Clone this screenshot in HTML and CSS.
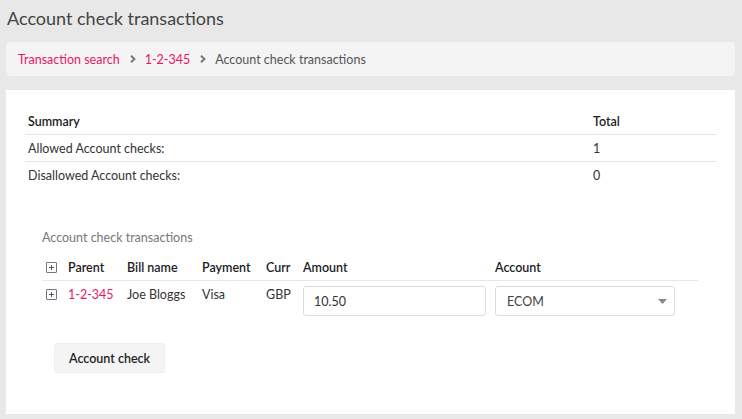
FILE: index.html
```html
<!DOCTYPE html>
<html lang="en">
<head>
    <meta charset="UTF-8">
    <meta name="viewport" content="width=device-width, initial-scale=1.0">
    <title>Account check transactions</title>
    <link rel="stylesheet" href="styles.css">
</head>
<body>
    <h1 class="page-title">Account check transactions</h1>

    <nav class="breadcrumb">
        <a href="#">Transaction search</a>
        <span class="sep"><svg width="6" height="8" viewBox="0 0 6 8"><path d="M1 0.8 L4.4 4 L1 7.2" fill="none" stroke="#777" stroke-width="2"/></svg></span>
        <a href="#">1-2-345</a>
        <span class="sep"><svg width="6" height="8" viewBox="0 0 6 8"><path d="M1 0.8 L4.4 4 L1 7.2" fill="none" stroke="#777" stroke-width="2"/></svg></span>
        <span class="current">Account check transactions</span>
    </nav>

    <div class="panel">
        <table class="summary">
            <thead>
                <tr>
                    <th class="col-label">Summary</th>
                    <th>Total</th>
                </tr>
            </thead>
            <tbody>
                <tr>
                    <td>Allowed Account checks:</td>
                    <td>1</td>
                </tr>
                <tr>
                    <td>Disallowed Account checks:</td>
                    <td>0</td>
                </tr>
            </tbody>
        </table>

        <div class="section">
            <div class="section-title">Account check transactions</div>
            <table class="transactions">
                <thead>
                    <tr>
                        <th class="col-icon"><span class="expand"></span></th>
                        <th class="col-parent">Parent</th>
                        <th class="col-bill">Bill name</th>
                        <th class="col-payment">Payment</th>
                        <th class="col-curr">Curr</th>
                        <th class="col-amount">Amount</th>
                        <th>Account</th>
                    </tr>
                </thead>
                <tbody>
                    <tr>
                        <td><span class="expand"></span></td>
                        <td><a href="#">1-2-345</a></td>
                        <td>Joe Bloggs</td>
                        <td>Visa</td>
                        <td>GBP</td>
                        <td><input type="text" class="field" value="10.50"></td>
                        <td>
                            <div class="select">
                                <span>ECOM</span>
                                <svg width="9" height="5" viewBox="0 0 9 5"><path d="M0 0 H9 L4.5 5 Z" fill="#888"/></svg>
                            </div>
                        </td>
                    </tr>
                </tbody>
            </table>

            <button class="btn">Account check</button>
        </div>
    </div>
</body>
</html>
```

FILE: styles.css
```css
/* General Styles */
body {
    font-family: Lato, "Open Sans", sans-serif;
    font-size: 12.5px;
    color: #333;
    background: #e8e8e8;
    margin: 0;
    padding: 0 7px 0 6px;
}

a {
    color: #e5195e;
    text-decoration: none;
}

.page-title {
    font-size: 18px;
    font-weight: normal;
    color: #444;
    line-height: 24px;
    margin: 0 0 12px;
    padding: 6px 0 0 1px;
}

.breadcrumb {
    display: flex;
    align-items: center;
    height: 34px;
    padding: 0 12px;
    background: #f4f4f4;
    border-radius: 4px;
    margin-bottom: 14px;
}

.breadcrumb .sep {
    display: flex;
    margin: 0 9px 0 10px;
}

.breadcrumb .current {
    color: #555;
}

.panel {
    background: #fff;
    padding: 18px 18px 41px 19px;
}

table {
    border-collapse: collapse;
}

th {
    text-align: left;
    font-weight: 600;
    color: #222;
}

/* Summary */
.summary {
    width: 100%;
}

.summary th,
.summary td {
    height: 26px;
    padding: 0 3px;
}

.summary tr {
    border-bottom: 1px solid #e6e6e6;
}

.summary tbody tr:last-child {
    border-bottom: none;
}

.summary .col-label {
    width: 559px;
}

/* Transactions */
.section {
    padding: 42px 19px 0 17px;
}

.section-title {
    color: #777;
    margin-bottom: 9px;
}

.transactions {
    width: 100%;
}

.transactions th {
    height: 26px;
    padding: 0 4px;
    border-bottom: 1px solid #e6e6e6;
}

.transactions td {
    padding: 5px 4px 4px;
    vertical-align: top;
}

.transactions tbody td:not(:nth-child(6)):not(:nth-child(7)) {
    padding-top: 6px;
}

.col-icon { width: 14px; }
.col-parent { width: 51px; }
.col-bill { width: 67px; }
.col-payment { width: 56px; }
.col-curr { width: 29px; }
.col-amount { width: 184px; }

.expand {
    display: inline-block;
    position: relative;
    width: 9px;
    height: 9px;
    border: 1px solid #7a7388;
    border-radius: 1px;
    vertical-align: -1px;
}

.expand::before,
.expand::after {
    content: "";
    position: absolute;
    background: #555;
}

.expand::before {
    left: 2px;
    top: 4px;
    width: 5px;
    height: 1px;
}

.expand::after {
    left: 4px;
    top: 2px;
    width: 1px;
    height: 5px;
}

.field {
    box-sizing: border-box;
    width: 183px;
    height: 30px;
    padding: 0 10px;
    border: 1px solid #ddd;
    border-radius: 3px;
    font: inherit;
    color: #333;
    outline: none;
}

.select {
    box-sizing: border-box;
    display: flex;
    align-items: center;
    justify-content: space-between;
    width: 180px;
    height: 30px;
    padding: 0 7px 0 11px;
    border: 1px solid #ddd;
    border-radius: 3px;
    color: #444;
}

.btn {
    margin: 23px 0 0 12px;
    height: 30px;
    padding: 0 14px;
    background: #f4f4f4;
    border: 1px solid #eee;
    border-radius: 3px;
    font: inherit;
    font-weight: 600;
    color: #222;
    cursor: pointer;
}
```
